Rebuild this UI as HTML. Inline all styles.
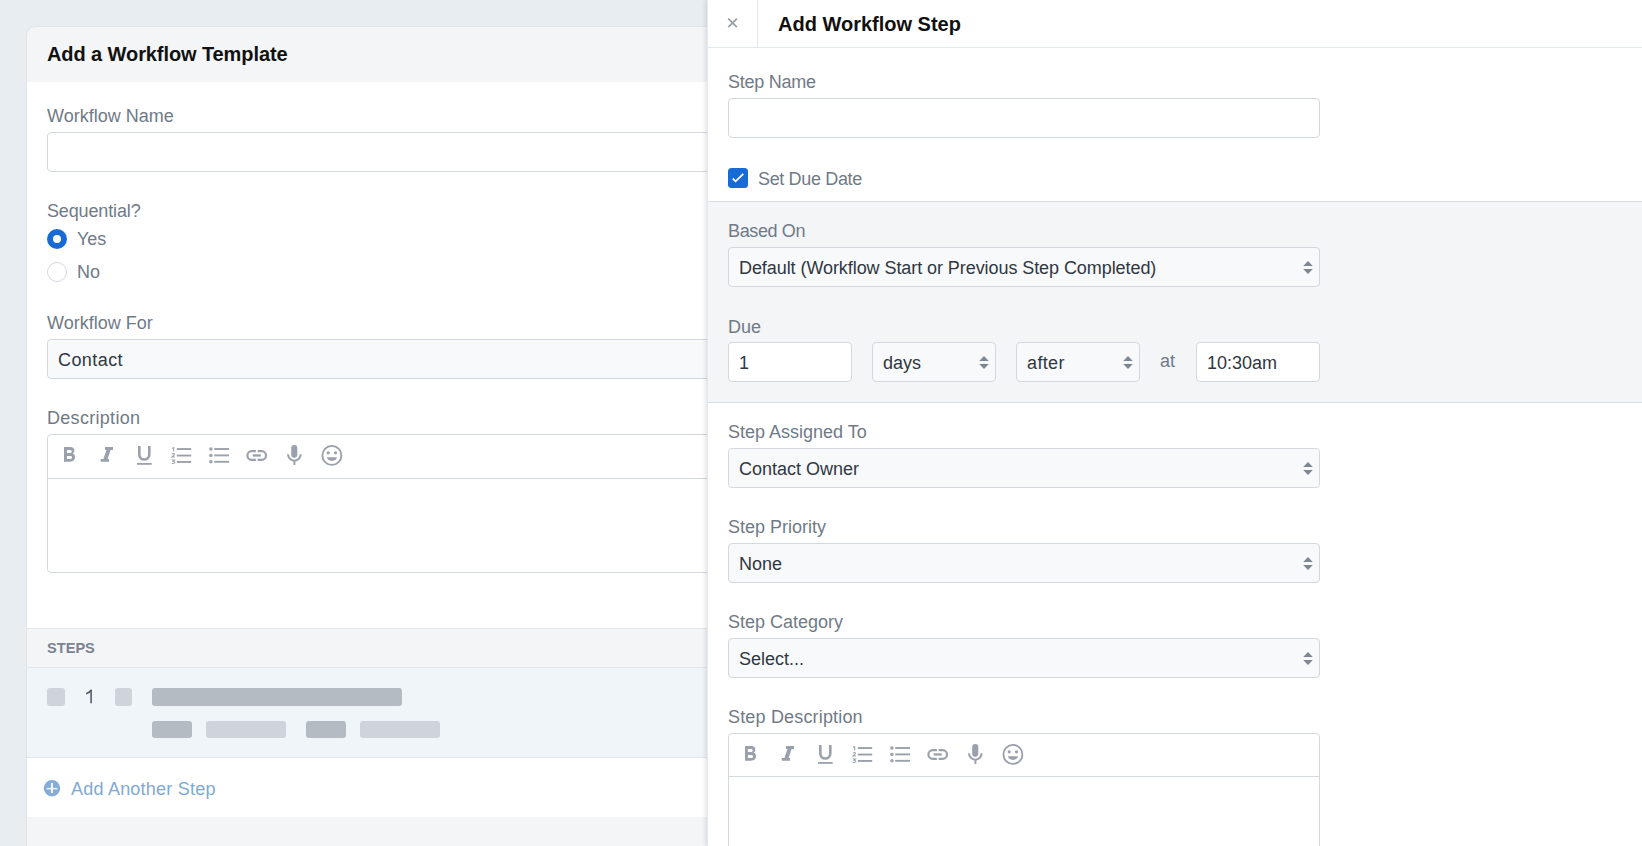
<!DOCTYPE html>
<html><head><meta charset="utf-8">
<style>
*{box-sizing:border-box;margin:0;padding:0}
html,body{width:1642px;height:846px;overflow:hidden;background:#e8edf1;font-family:"Liberation Sans",sans-serif;position:relative}
.a{position:absolute}
.lbl{position:absolute;font-size:18px;line-height:20px;color:#6f7a87;white-space:nowrap}
.val{position:absolute;font-size:18px;line-height:20px;color:#2f3742;white-space:nowrap}
.inp{position:absolute;height:40px;border:1px solid #d3d8de;border-radius:4px;background:#fff}
.sel{position:absolute;height:40px;border:1px solid #d3d8de;border-radius:4px;background:#f8f9fb}
.arr{position:absolute;right:7px;top:13px;width:10px;height:14px}
#card{position:absolute;left:27px;top:27px;width:1588px;height:900px;background:#f3f5f7;border-radius:8px;box-shadow:0 0 2px rgba(0,0,0,.12)}
#panel{position:absolute;left:707px;top:0;width:935px;height:846px;background:#fff;box-shadow:-1px 0 5px rgba(0,0,0,.14)}
</style></head><body>

<div id="card">
  <!-- header -->
  <div class="a" style="left:20px;top:15px;font-size:20px;line-height:24px;font-weight:bold;color:#111;white-space:nowrap;letter-spacing:-0.09px">Add a Workflow Template</div>
  <!-- white body -->
  <div class="a" style="left:0;top:55px;width:1588px;height:546px;background:#fff"></div>
  <div class="lbl" style="left:20px;top:79px">Workflow Name</div>
  <div class="inp" style="left:20px;top:105px;width:1200px"></div>

  <div class="lbl" style="left:20px;top:174px;letter-spacing:-0.14px">Sequential?</div>
  <div class="a" style="left:20px;top:202px;width:20px;height:20px;border-radius:50%;background:#fff;border:6px solid #166bd5"></div>
  <div class="lbl" style="left:50px;top:202px">Yes</div>
  <div class="a" style="left:20px;top:235px;width:20px;height:20px;border-radius:50%;background:#fff;border:1px solid #d3d8de"></div>
  <div class="lbl" style="left:50px;top:235px">No</div>

  <div class="lbl" style="left:20px;top:286px">Workflow For</div>
  <div class="sel" style="left:20px;top:312px;width:1200px"><div class="val" style="left:10px;top:10px;letter-spacing:0.42px">Contact</div><svg class="a" style="right:6px;top:12px" width="10" height="15" viewBox="0 0 10 15"><path d="M0.2 6H9.8L5 1ZM0.2 9H9.8L5 14Z" fill="#7f8792"/></svg></div>

  <div class="lbl" style="left:20px;top:381px;letter-spacing:0.3px">Description</div>
  <div class="inp" style="left:20px;top:407px;width:1200px;height:139px">
    <div class="a" style="left:0;top:43px;width:100%;height:1px;background:#d3d8de"></div>
<svg class="a" style="left:-1px;top:-1px" width="310" height="40" viewBox="0 0 310 40"><g fill="#9aa1ac" stroke="none">
<path fill-rule="evenodd" d="M17 13H23.3C25.9 13 27.4 14.4 27.4 16.6C27.4 18 26.8 19 25.7 19.6C27.2 20.1 28 21.4 28 23C28 25.8 26.2 27.7 23.3 27.7H17ZM19.9 16V19H23C24.1 19 24.7 18.4 24.7 17.5C24.7 16.6 24.1 16 23 16ZM19.9 22V25H23.2C24.4 25 25.1 24.4 25.1 23.5C25.1 22.6 24.4 22 23.2 22Z"/>
<path d="M58 13H66V15.9H63.6L60.6 25H62V27.7H53.7V25H56.4L59.5 15.9H58Z"/>
<path d="M92.3 12V20.5A5 5 0 0 0 102.3 20.5V12" fill="none" stroke="#9aa1ac" stroke-width="2.6"/>
<rect x="90" y="29" width="14.7" height="1.8"/>
<path d="M125.1 14.5L126.7 13.6V17.6" fill="none" stroke="#9aa1ac" stroke-width="1.05"/>
<path d="M124.9 20.1Q125.7 19.5 126.6 19.6Q127.7 19.9 127.2 20.9L125 23H127.9" fill="none" stroke="#9aa1ac" stroke-width="1.05"/>
<path d="M124.8 26H127.5L126.1 27.3Q127.9 27.5 127.8 28.5Q127.5 29.9 124.7 29.3" fill="none" stroke="#9aa1ac" stroke-width="1.05"/>
<rect x="129.8" y="14.1" width="14.4" height="1.9"/><rect x="129.8" y="20.6" width="14.4" height="1.9"/><rect x="129.8" y="27" width="14.4" height="1.9"/>
<circle cx="163.9" cy="15" r="1.7"/><circle cx="163.9" cy="21.4" r="1.7"/><circle cx="163.9" cy="27.8" r="1.7"/>
<rect x="167.2" y="14.05" width="14.8" height="1.9"/><rect x="167.2" y="20.45" width="14.8" height="1.9"/><rect x="167.2" y="26.85" width="14.8" height="1.9"/>
<path d="M208.9 17.2H204.7A4.3 4.3 0 0 0 204.7 25.8H208.9M210.6 17.2H214.7A4.3 4.3 0 0 1 214.7 25.8H210.6" fill="none" stroke="#9aa1ac" stroke-width="2.2"/>
<rect x="205.7" y="20.3" width="8.1" height="2.3"/>
<rect x="244.2" y="11" width="6.1" height="12.9" rx="3.05"/>
<path d="M241 20.3A6.35 6.35 0 0 0 253.7 20.3" fill="none" stroke="#9aa1ac" stroke-width="2"/>
<rect x="246.4" y="26.2" width="2" height="4.7"/>
<circle cx="284.9" cy="21.4" r="9.5" fill="none" stroke="#9aa1ac" stroke-width="1.85"/>
<circle cx="281.2" cy="18.8" r="1.6"/><circle cx="288.5" cy="18.8" r="1.6"/>
<path d="M280 23.3H289.9A4.95 3.6 0 0 1 280 23.3Z"/>
</g></svg>
  </div>

  <!-- steps band -->
  <div class="a" style="left:0;top:601px;width:1588px;height:40px;background:#f3f5f7;border-top:1px solid #e3e7ec;border-bottom:1px solid #e3e7ec"></div>
  <div class="a" style="left:20px;top:613px;font-size:14.6px;line-height:17px;font-weight:bold;color:#7b8390;letter-spacing:0px">STEPS</div>
  <div class="a" style="left:0;top:641px;width:1588px;height:90px;background:#f0f5fa;border-bottom:1px solid #e3e7ec"></div>
  <div class="a" style="left:20px;top:661px;width:18px;height:18px;border-radius:3px;background:#cfd4db"></div>
  <svg class="a" style="left:57px;top:660px" width="10" height="18" viewBox="0 0 10 18"><path d="M2.2 6.7Q5.7 5.5 7.1 3.2V16.3" fill="none" stroke="#4a5360" stroke-width="1.5" stroke-linejoin="round"/></svg>
  <div class="a" style="left:88px;top:661px;width:17px;height:18px;border-radius:3px;background:#cfd4db"></div>
  <div class="a" style="left:125px;top:661px;width:250px;height:18px;border-radius:3px;background:#b5bbc3"></div>
  <div class="a" style="left:125px;top:694px;width:40px;height:17px;border-radius:3px;background:#b5bbc3"></div>
  <div class="a" style="left:179px;top:694px;width:80px;height:17px;border-radius:3px;background:#cfd4db"></div>
  <div class="a" style="left:279px;top:694px;width:40px;height:17px;border-radius:3px;background:#b5bbc3"></div>
  <div class="a" style="left:333px;top:694px;width:80px;height:17px;border-radius:3px;background:#cfd4db"></div>
  <!-- add another -->
  <div class="a" style="left:0;top:731px;width:1588px;height:59px;background:#fff"></div>
  <svg class="a" style="left:16px;top:752px" width="18" height="18" viewBox="0 0 18 18"><circle cx="9" cy="9.3" r="8.2" fill="#84acd8"/><rect x="7.9" y="3.9" width="2.1" height="10.1" fill="#eef3f9"/><rect x="3.6" y="8.9" width="10.8" height="1.5" fill="#eef3f9"/></svg>
  <div class="lbl" style="left:44px;top:752px;color:#80a9d6;letter-spacing:0.22px">Add Another Step</div>
</div>

<div id="panel">
  <div class="a" style="left:0;top:0;width:1px;height:846px;background:#e5eaef;z-index:5"></div>
  <div class="a" style="left:0;top:0;width:935px;height:48px;border-bottom:1px solid #e3e8ed"></div>
  <div class="a" style="left:50px;top:0;width:1px;height:47px;background:#e3e8ed"></div>
  <svg class="a" style="left:0;top:0" width="50" height="47" viewBox="0 0 50 47"><path d="M21.2 18.6L29.9 27.1M29.9 18.6L21.2 27.1" stroke="#9aa1ab" stroke-width="1.8" fill="none"/></svg>
  <div class="a" style="left:71px;top:12px;font-size:20px;line-height:24px;font-weight:bold;color:#111;white-space:nowrap">Add Workflow Step</div>

  <div class="lbl" style="left:21px;top:72px;letter-spacing:-0.26px">Step Name</div>
  <div class="inp" style="left:21px;top:98px;width:592px"></div>
  <div class="a" style="left:21px;top:168px;width:20px;height:20px;border-radius:3.5px;background:#166bd5"><svg class="a" style="left:0;top:0" width="20" height="20" viewBox="0 0 20 20"><path d="M4.8 10.5L7.6 13.3L15.3 5.8" stroke="#fff" stroke-width="1.85" fill="none"/></svg></div>
  <div class="lbl" style="left:51px;top:169px;letter-spacing:-0.35px">Set Due Date</div>

  <div class="a" style="left:0;top:201px;width:935px;height:202px;background:#f3f5f7;border-top:1px solid #d9dee4;border-bottom:1px solid #d9dee4"></div>
  <div class="lbl" style="left:21px;top:221px;letter-spacing:-0.37px">Based On</div>
  <div class="sel" style="left:21px;top:247px;width:592px"><div class="val" style="left:10px;top:10px;letter-spacing:-0.07px">Default (Workflow Start or Previous Step Completed)</div><svg class="a" style="right:6px;top:12px" width="10" height="15" viewBox="0 0 10 15"><path d="M0.2 6H9.8L5 1ZM0.2 9H9.8L5 14Z" fill="#7f8792"/></svg></div>
  <div class="lbl" style="left:21px;top:317px">Due</div>
  <div class="inp" style="left:21px;top:342px;width:124px"><div class="val" style="left:10px;top:10px">1</div></div>
  <div class="sel" style="left:165px;top:342px;width:124px"><div class="val" style="left:10px;top:10px">days</div><svg class="a" style="right:6px;top:12px" width="10" height="15" viewBox="0 0 10 15"><path d="M0.2 6H9.8L5 1ZM0.2 9H9.8L5 14Z" fill="#7f8792"/></svg></div>
  <div class="sel" style="left:309px;top:342px;width:124px"><div class="val" style="left:10px;top:10px;letter-spacing:0.37px">after</div><svg class="a" style="right:6px;top:12px" width="10" height="15" viewBox="0 0 10 15"><path d="M0.2 6H9.8L5 1ZM0.2 9H9.8L5 14Z" fill="#7f8792"/></svg></div>
  <div class="lbl" style="left:453px;top:351px">at</div>
  <div class="inp" style="left:489px;top:342px;width:124px"><div class="val" style="left:10px;top:10px">10:30am</div></div>

  <div class="lbl" style="left:21px;top:422px">Step Assigned To</div>
  <div class="sel" style="left:21px;top:448px;width:592px"><div class="val" style="left:10px;top:10px">Contact Owner</div><svg class="a" style="right:6px;top:12px" width="10" height="15" viewBox="0 0 10 15"><path d="M0.2 6H9.8L5 1ZM0.2 9H9.8L5 14Z" fill="#7f8792"/></svg></div>
  <div class="lbl" style="left:21px;top:517px">Step Priority</div>
  <div class="sel" style="left:21px;top:543px;width:592px"><div class="val" style="left:10px;top:10px">None</div><svg class="a" style="right:6px;top:12px" width="10" height="15" viewBox="0 0 10 15"><path d="M0.2 6H9.8L5 1ZM0.2 9H9.8L5 14Z" fill="#7f8792"/></svg></div>
  <div class="lbl" style="left:21px;top:612px">Step Category</div>
  <div class="sel" style="left:21px;top:638px;width:592px"><div class="val" style="left:10px;top:10px">Select...</div><svg class="a" style="right:6px;top:12px" width="10" height="15" viewBox="0 0 10 15"><path d="M0.2 6H9.8L5 1ZM0.2 9H9.8L5 14Z" fill="#7f8792"/></svg></div>
  <div class="lbl" style="left:21px;top:707px;letter-spacing:0.17px">Step Description</div>
  <div class="inp" style="left:21px;top:733px;width:592px;height:200px">
    <div class="a" style="left:0;top:42px;width:100%;height:1px;background:#d3d8de"></div>
<svg class="a" style="left:-1px;top:-1px" width="310" height="40" viewBox="0 0 310 40"><g fill="#9aa1ac" stroke="none">
<path fill-rule="evenodd" d="M17 13H23.3C25.9 13 27.4 14.4 27.4 16.6C27.4 18 26.8 19 25.7 19.6C27.2 20.1 28 21.4 28 23C28 25.8 26.2 27.7 23.3 27.7H17ZM19.9 16V19H23C24.1 19 24.7 18.4 24.7 17.5C24.7 16.6 24.1 16 23 16ZM19.9 22V25H23.2C24.4 25 25.1 24.4 25.1 23.5C25.1 22.6 24.4 22 23.2 22Z"/>
<path d="M58 13H66V15.9H63.6L60.6 25H62V27.7H53.7V25H56.4L59.5 15.9H58Z"/>
<path d="M92.3 12V20.5A5 5 0 0 0 102.3 20.5V12" fill="none" stroke="#9aa1ac" stroke-width="2.6"/>
<rect x="90" y="29" width="14.7" height="1.8"/>
<path d="M125.1 14.5L126.7 13.6V17.6" fill="none" stroke="#9aa1ac" stroke-width="1.05"/>
<path d="M124.9 20.1Q125.7 19.5 126.6 19.6Q127.7 19.9 127.2 20.9L125 23H127.9" fill="none" stroke="#9aa1ac" stroke-width="1.05"/>
<path d="M124.8 26H127.5L126.1 27.3Q127.9 27.5 127.8 28.5Q127.5 29.9 124.7 29.3" fill="none" stroke="#9aa1ac" stroke-width="1.05"/>
<rect x="129.8" y="14.1" width="14.4" height="1.9"/><rect x="129.8" y="20.6" width="14.4" height="1.9"/><rect x="129.8" y="27" width="14.4" height="1.9"/>
<circle cx="163.9" cy="15" r="1.7"/><circle cx="163.9" cy="21.4" r="1.7"/><circle cx="163.9" cy="27.8" r="1.7"/>
<rect x="167.2" y="14.05" width="14.8" height="1.9"/><rect x="167.2" y="20.45" width="14.8" height="1.9"/><rect x="167.2" y="26.85" width="14.8" height="1.9"/>
<path d="M208.9 17.2H204.7A4.3 4.3 0 0 0 204.7 25.8H208.9M210.6 17.2H214.7A4.3 4.3 0 0 1 214.7 25.8H210.6" fill="none" stroke="#9aa1ac" stroke-width="2.2"/>
<rect x="205.7" y="20.3" width="8.1" height="2.3"/>
<rect x="244.2" y="11" width="6.1" height="12.9" rx="3.05"/>
<path d="M241 20.3A6.35 6.35 0 0 0 253.7 20.3" fill="none" stroke="#9aa1ac" stroke-width="2"/>
<rect x="246.4" y="26.2" width="2" height="4.7"/>
<circle cx="284.9" cy="21.4" r="9.5" fill="none" stroke="#9aa1ac" stroke-width="1.85"/>
<circle cx="281.2" cy="18.8" r="1.6"/><circle cx="288.5" cy="18.8" r="1.6"/>
<path d="M280 23.3H289.9A4.95 3.6 0 0 1 280 23.3Z"/>
</g></svg>
  </div>
</div>

</body></html>
